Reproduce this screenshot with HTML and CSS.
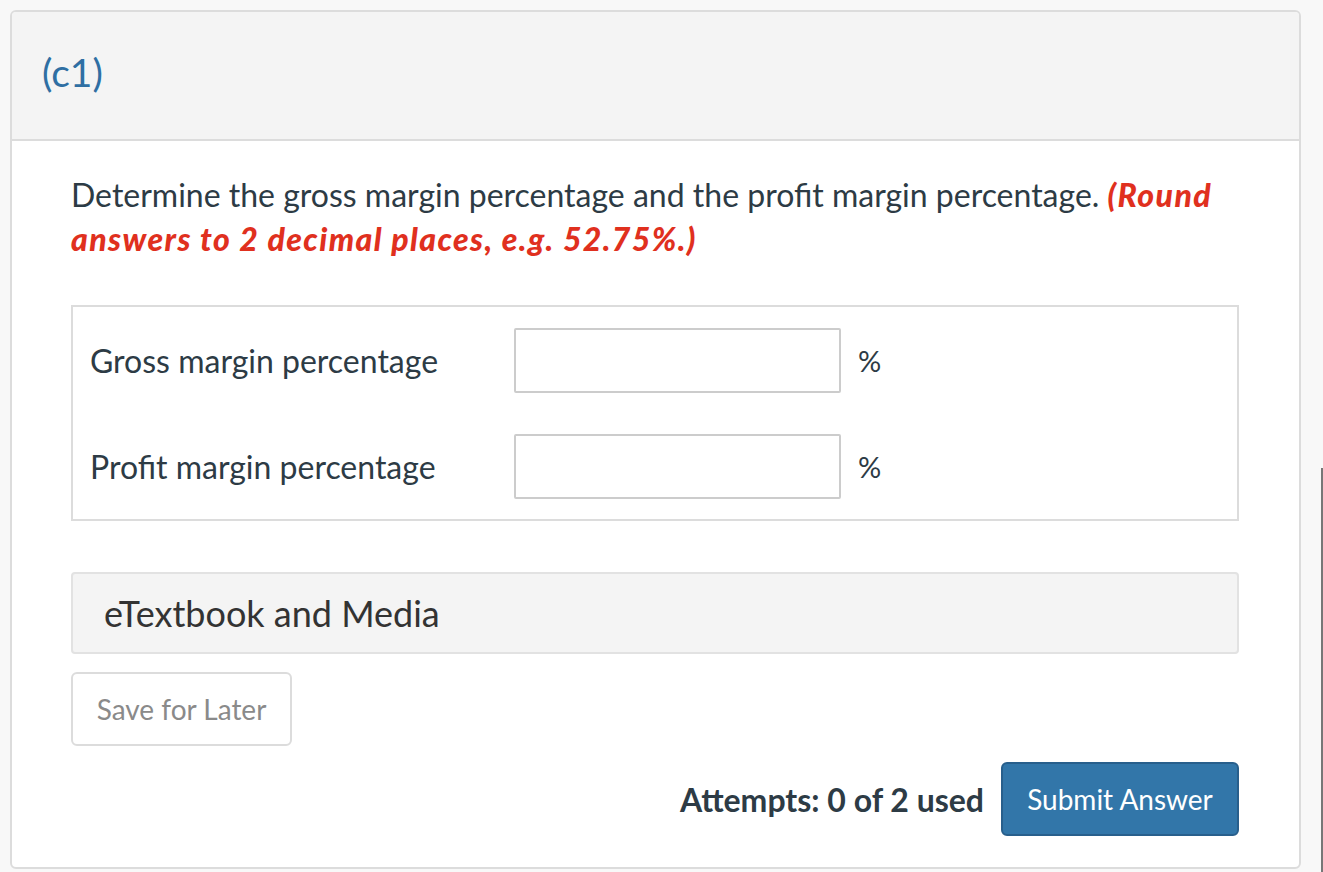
FILE: index.html
```html
<!DOCTYPE html>
<html>
<head>
    <title>Question c1</title>
    <link rel="stylesheet" href="styles.css">
</head>
<body>
    <div class="page">
        <div class="card">
            <div class="card-header">
                <span class="part-label">(c1)</span>
            </div>
            <div class="card-body">
                <p class="question">
                    Determine the gross margin percentage and the profit margin percentage.
                    <strong class="hint">(Round answers to 2 decimal places, e.g. 52.75%.)</strong>
                </p>

                <div class="answer-box">
                    <div class="answer-row">
                        <label class="answer-label">Gross margin percentage</label>
                        <input class="answer-input" type="text">
                        <span class="unit">%</span>
                    </div>
                    <div class="answer-row">
                        <label class="answer-label">Profit margin percentage</label>
                        <input class="answer-input" type="text">
                        <span class="unit">%</span>
                    </div>
                </div>

                <div class="media-bar">eTextbook and Media</div>

                <button class="btn-save">Save for Later</button>

                <div class="submit-row">
                    <span class="attempts">Attempts: 0 of 2 used</span>
                    <button class="btn-submit">Submit Answer</button>
                </div>
            </div>
        </div>
        <div class="scroll-track">
            <div class="scroll-thumb"></div>
        </div>
    </div>
</body>
</html>
```

FILE: styles.css
```css
html, body {
    margin: 0;
    height: 100%;
}

body {
    font-family: Lato, "Open Sans", Arial, sans-serif;
    color: #2d3b45;
    background-color: #f8f8f8;
    overflow: hidden;
}

.page {
    display: flex;
    height: 872px;
    padding: 10px 0 0 10px;
    box-sizing: border-box;
}

.card {
    width: 1291px;
    height: 859px;
    box-sizing: border-box;
    background-color: #fff;
    border: 2px solid #dcdcdc;
    border-radius: 6px;
    overflow: hidden;
}

.card-header {
    height: 129px;
    box-sizing: border-box;
    background-color: #f4f4f4;
    border-bottom: 2px solid #dcdcdc;
    display: flex;
    align-items: center;
    padding: 0 0 8px 30px;
}

.part-label {
    color: #2f6fa3;
    font-size: 39px;
}

.card-body {
    padding: 32px 60px 0 59px;
}

.question {
    margin: 0;
    font-size: 32px;
    line-height: 44px;
}

.hint {
    color: #e0301e;
    font-style: italic;
    font-weight: 900;
    letter-spacing: 1.4px;
}

.answer-box {
    margin-top: 44px;
    border: 2px solid #dcdcdc;
    padding: 21px 0 20px 17px;
}

.answer-row {
    display: flex;
    align-items: center;
    height: 65px;
}

.answer-row + .answer-row {
    margin-top: 41px;
}

.answer-label {
    width: 424px;
    font-size: 32px;
}

.answer-input {
    width: 327px;
    height: 65px;
    box-sizing: border-box;
    border: 2px solid #cccccc;
    border-radius: 2px;
    font-size: 28px;
    padding: 0 12px;
}

.unit {
    margin-left: 17px;
    font-size: 29px;
}

.media-bar {
    margin-top: 51px;
    height: 82px;
    box-sizing: border-box;
    background-color: #f4f4f4;
    border: 2px solid #e2e2e2;
    border-radius: 4px;
    display: flex;
    align-items: center;
    padding-left: 31px;
    font-size: 36px;
    color: #333;
}

.btn-save {
    display: block;
    margin-top: 18px;
    width: 221px;
    height: 74px;
    background-color: #fff;
    border: 2px solid #dcdcdc;
    border-radius: 6px;
    font-family: Lato, "Open Sans", Arial, sans-serif;
    font-size: 28px;
    color: #8a8a8a;
    cursor: pointer;
}

.submit-row {
    display: flex;
    justify-content: flex-end;
    align-items: center;
    margin-top: 16px;
}

.attempts {
    font-size: 32px;
    font-weight: bold;
    margin-right: 17px;
}

.btn-submit {
    width: 238px;
    height: 74px;
    background-color: #3276a9;
    border: 2px solid #285f8c;
    border-radius: 6px;
    font-family: Lato, "Open Sans", Arial, sans-serif;
    font-size: 28px;
    color: #fff;
    cursor: pointer;
}

.scroll-track {
    flex: 1;
    display: flex;
    justify-content: flex-end;
    padding-top: 458px;
}

.scroll-thumb {
    width: 2px;
    background-color: #777;
}
```
